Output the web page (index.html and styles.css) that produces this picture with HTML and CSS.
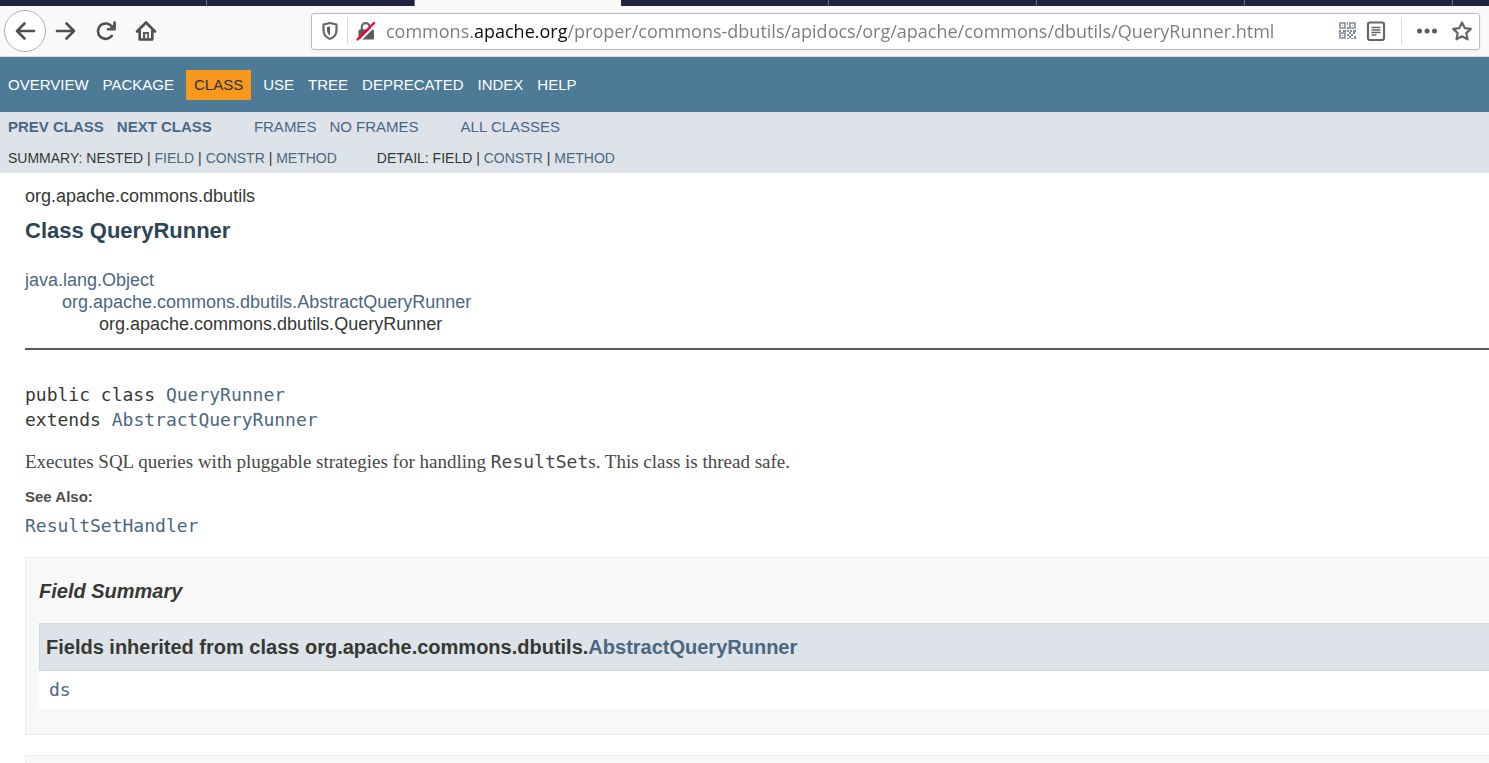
FILE: index.html
```
<!DOCTYPE html>
<html lang="en">
<head>
<meta charset="utf-8">
<title>QueryRunner</title>
<link rel="stylesheet" href="styles.css">
</head>
<body>
<header class="browser">
  <div class="tabs"><i class="tab"></i><i class="tab"></i><i class="tab active"></i><i class="tab"></i><i class="tab"></i><i class="tab"></i><i class="tab"></i><i class="tab"></i></div>
  <div class="toolbar">
    <div class="buttons">
      <button class="icon-button back" aria-label="Back"><svg width="22" height="22" viewBox="0 0 22 22"><path d="M20 11H3M10.500 3.500L3 11l7.500 7.500"/></svg></button>
      <button class="icon-button" aria-label="Forward"><svg width="22" height="22" viewBox="0 0 22 22"><path d="M2 11h17M11.500 3.500L19 11l-7.500 7.500"/></svg></button>
      <button class="icon-button" aria-label="Reload"><svg width="22" height="22" viewBox="0 0 22 22"><path d="M16.800 15.800A7.700 7.700 0 1 1 17 6.800L19.300 9M19.600 2.500V9.200H13"/><path class="solid" d="M19.600 3v6.200H13.500z"/></svg></button>
      <button class="icon-button" aria-label="Home"><svg width="22" height="22" viewBox="0 0 22 22"><path d="M2 11.500L11 2.500l9 9M4.700 10.500V19.500H17.300V10.500"/><path class="solid" d="M8 19v-7h6v7h-1.800v-5h-2v5z"/></svg></button>
    </div>
    <div class="address">
      <button class="site-button" aria-label="Tracking protection"><svg width="20" height="20" viewBox="0 0 20 20"><path d="M10 2L3.500 3.500V9c0 4.500 2.500 7.500 6.500 9 4-1.500 6.500-4.500 6.500-9V3.500z"/><path class="solid" d="M10 5.500L7 6.300V9c0 2.500 1 4.200 3 5.500z"/></svg></button>
      <span class="divider short"></span>
      <button class="site-button" aria-label="Connection is not secure"><svg width="20" height="20" viewBox="0 0 20 20"><path d="M5.800 9V6a3.900 3.900 0 0 1 7.800 0v3"/><rect class="solid" x="2.500" y="8.500" width="15.500" height="10" rx="1.500"/><path class="gap" d="M3.500 20L20 3.500"/><path class="slash" d="M1.500 18.500L18 2"/></svg></button>
      <input class="url" type="text" aria-label="Address" value="commons.apache.org/proper/commons-dbutils/apidocs/org/apache/commons/dbutils/QueryRunner.html">
      <div class="page-actions">
        <button class="site-button" aria-label="QR code"><svg class="qr" width="20" height="20" viewBox="0 0 20 20"><path d="M2 2h5v5H2zM12 2h5v5h-5zM2 12h5v5H2z"/><path class="solid" d="M4 4h1v1H4zM14 4h1v1h-1zM4 14h1v1H4zM9 1h1v3H9zM9 6h2v2H9zM1 9h2v2H1zM5 9h3v2H5zM9 9h2v2H9zM12 9h2v2h-2zM15 9h3v2h-3zM9 13h2v2H9zM11 11h2v2h-2zM13 13h2v2h-2zM15 11h2v2h-2zM16 15h2v3h-2zM11 15h2v2h-2zM9 17h2v1H9zM13 17h2v1h-2z"/></svg></button>
        <button class="site-button" aria-label="Reader view"><svg width="20" height="20" viewBox="0 0 20 20"><rect x="2" y="1.500" width="16" height="17.500" rx="2"/><path class="thin" d="M6 6.500h8M6 9h8M6 11.500h8M6 14h4"/></svg></button>
        <span class="divider"></span>
        <button class="site-button" aria-label="Page actions"><svg width="20" height="20" viewBox="0 0 20 20"><g class="solid"><circle cx="2.500" cy="10" r="2.500"/><circle cx="10" cy="10" r="2.500"/><circle cx="17.500" cy="10" r="2.500"/></g></svg></button>
        <button class="site-button" aria-label="Bookmark this page"><svg width="20" height="20" viewBox="0 0 20 20"><path d="M10 1.500l2.700 5.600 6.100.8-4.500 4.200 1.200 6.200L10 15.300l-5.500 3 1.200-6.200L1.200 7.900l6.100-.8z"/></svg></button>
      </div>
    </div>
  </div>
</header>
<nav class="top-nav">
  <a href="#">OVERVIEW</a><a href="#">PACKAGE</a><span class="current">CLASS</span><a href="#">USE</a><a href="#">TREE</a><a href="#">DEPRECATED</a><a href="#">INDEX</a><a href="#">HELP</a>
</nav>
<nav class="sub-nav">
  <div class="sub-row links">
    <div class="group"><a class="strong" href="#">PREV CLASS</a><a class="strong" href="#">NEXT CLASS</a></div>
    <div class="group"><a href="#">FRAMES</a><a href="#">NO FRAMES</a></div>
    <div class="group"><a href="#">ALL CLASSES</a></div>
  </div>
  <div class="sub-row sections">
    <div>SUMMARY: NESTED | <a href="#">FIELD</a> | <a href="#">CONSTR</a> | <a href="#">METHOD</a></div>
    <div>DETAIL: FIELD | <a href="#">CONSTR</a> | <a href="#">METHOD</a></div>
  </div>
</nav>
<main class="content">
  <div class="package">org.apache.commons.dbutils</div>
  <h2 class="title">Class QueryRunner</h2>
  <ul class="inheritance">
    <li><a href="#">java.lang.Object</a>
      <ul>
        <li><a href="#">org.apache.commons.dbutils.AbstractQueryRunner</a>
          <ul><li>org.apache.commons.dbutils.QueryRunner</li></ul>
        </li>
      </ul>
    </li>
  </ul>
  <hr class="rule">
  <pre class="signature">public class <a href="#">QueryRunner</a>
extends <a href="#">AbstractQueryRunner</a></pre>
  <p class="description">Executes SQL queries with pluggable strategies for handling <code>ResultSet</code>s. This class is thread safe.</p>
  <dl class="see-also">
    <dt>See Also:</dt>
    <dd><a href="#"><code>ResultSetHandler</code></a></dd>
  </dl>
  <section class="summary">
    <h3>Field Summary</h3>
    <h4>Fields inherited from class org.apache.commons.dbutils.<a href="#">AbstractQueryRunner</a></h4>
    <div class="members"><code><a href="#">ds</a></code></div>
  </section>
  <section class="summary"></section>
</main>
</body>
</html>
```

FILE: styles.css
```
* { box-sizing: border-box; }
body {
  margin: 0;
  height: 100vh;
  overflow: hidden;
  background: #fff;
  color: #353833;
  font: 18px/22px "Liberation Sans", Arial, sans-serif;
}
a { color: #4a6782; text-decoration: none; }
code, pre { font-family: "DejaVu Sans Mono", monospace; font-size: 18px; }
svg { display: block; fill: none; stroke: #4f4f52; stroke-width: 2.6; stroke-linecap: round; stroke-linejoin: round; }
svg .solid { fill: #5c5c5f; stroke: none; }
svg .thin { stroke-width: 1.3; }
svg .slash { stroke: #ff0039; stroke-width: 2.4; }
svg .gap { stroke: #fff; stroke-width: 2; }

.browser { border-bottom: 1px solid #dcdcdf; background: #f9f9fa; }
.tabs { display: flex; height: 6px; background: #202340; overflow: hidden; }
.tab { flex: 0 0 208px; border-right: 1px solid #6b6d80; }
.tab:first-child { flex-basis: 207px; }
.tab.active { flex-basis: 206px; border: 0; background: #f9f9fa; }
.toolbar { display: flex; align-items: center; height: 50px; padding: 0 9px 0 4px; }
.buttons { display: flex; flex: 0 0 307px; align-items: center; }
.icon-button, .site-button { display: grid; place-items: center; border: 0; padding: 0; background: none; }
.icon-button { width: 40px; height: 42px; }
.icon-button.back { width: 42px; border: 1px solid #b1b1b3; border-radius: 50%; background: #fff; }
.address { display: flex; flex: 1; align-items: center; height: 37px; padding: 0 7px 0 8px; border: 1px solid #bababc; border-radius: 3px; background: #fff; box-shadow: 0 1px 4px #0000000d; }
.site-button { flex: none; width: 20px; height: 28px; }
.site-button svg { stroke: #666669; stroke-width: 2.2; }
.site-button .qr { stroke: #858c95; stroke-width: 1.6; stroke-linejoin: miter; }
.site-button .qr .solid { fill: #858c95; }
.divider { width: 1px; height: 26px; background: #dcdcde; }
.divider.short { margin: 0 8px 0 7px; }
.url {
  flex: 1;
  min-width: 0;
  margin: 0 0 0 10px;
  border: 0;
  padding: 0;
  outline: 0;
  color: transparent;
  background: linear-gradient(90deg, #7b7b7d 87px, #0c0c0d 87px 181px, #7b7b7d 181px);
  background-clip: text;
  font: 18px/26px "Open Sans", "Noto Sans", sans-serif;
}
.page-actions { display: flex; align-items: center; gap: 15px; }
.page-actions .site-button:first-child { margin-right: -7px; }

.top-nav { display: flex; align-items: center; gap: 14px; height: 55px; padding: 0 8px; background: #4d7a97; font-size: 15px; }
.top-nav a { color: #fff; }
.current { margin: 0 -2px; padding: 4px 8px; background: #f8981d; color: #253441; }
.sub-nav { padding: 0 8px; background: #dee3e9; font-size: 15px; }
.sub-row { display: flex; align-items: center; height: 30px; }
.links { gap: 42px; }
.sections { gap: 40px; height: 31px; font-size: 14px; }
.group { display: flex; gap: 13px; }
.strong { font-weight: bold; }

.content { padding: 12px 0 0 25px; }
.title { margin: 12px 0 26px; color: #2c4557; font-size: 22px; line-height: 24px; }
.inheritance, .inheritance ul { margin: 0; padding: 0; list-style: none; }
.inheritance ul { padding-left: 37px; }
.rule { margin: 13px 0 32px; border: 0; border-top: 2px solid #5a5758; }
.signature { margin: 0 0 18px; line-height: 25px; }
.description { margin: 0; color: #474747; font: 19px/24px "Liberation Serif", Georgia, serif; }
.see-also { margin: 12px 0 0; color: #4e4e4e; }
.see-also dt { font-size: 15px; font-weight: bold; line-height: 22px; }
.see-also dd { margin: 7px 0 0; line-height: 22px; }
.summary { min-height: 60px; margin: 20px 0 0; padding: 20px 0 25px 13px; border: 1px solid #ededed; border-right: 0; background: #f8f8f8; }
.summary h3 { margin: 0 0 19px; font-size: 20px; font-style: italic; line-height: 26px; }
.summary h4 { margin: 0; padding: 10px 6px; border: 1px solid #d0d9e0; border-right: 0; background: #dee3e9; font-size: 20px; line-height: 26px; }
.members { padding: 8px 10px; background: #fff; }
```
